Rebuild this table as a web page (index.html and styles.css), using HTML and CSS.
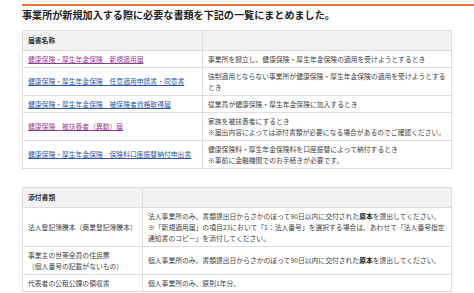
FILE: index.html
```html
<!DOCTYPE html>
<html lang="ja">
<head>
<meta charset="utf-8">
<link rel="stylesheet" href="styles.css">
</head>
<body>
<div class="page">
  <h2 class="title">事業所が新規加入する際に必要な書類を下記の一覧にまとめました。</h2>
  <table class="docs docs-forms">
    <colgroup><col class="c1"><col class="c2"></colgroup>
    <thead>
      <tr><th>届書名称</th><th></th></tr>
    </thead>
    <tbody>
      <tr><td><a class="visited" href="#">健康保険・厚生年金保険　新規適用届</a></td><td>事業所を設立し、健康保険・厚生年金保険の適用を受けようとするとき</td></tr>
      <tr><td><a href="#">健康保険・厚生年金保険　任意適用申請書・同意書</a></td><td>強制適用とならない事業所が健康保険・厚生年金保険の適用を受けようとするとき</td></tr>
      <tr><td><a href="#">健康保険・厚生年金保険　被保険者資格取得届</a></td><td>従業員が健康保険・厚生年金保険に加入するとき</td></tr>
      <tr><td><a class="visited" href="#">健康保険　被扶養者（異動）届</a></td><td>家族を被扶養者にするとき<br>※届出内容によっては添付書類が必要になる場合があるのでご確認ください。</td></tr>
      <tr><td><a href="#">健康保険・厚生年金保険　保険料口座振替納付申出書</a></td><td>健康保険料・厚生年金保険料を口座振替によって納付するとき<br>※事前に金融機関でのお手続きが必要です。</td></tr>
    </tbody>
  </table>
  <table class="docs docs-attach">
    <colgroup><col class="c1"><col class="c2"></colgroup>
    <thead>
      <tr><th>添付書類</th><th></th></tr>
    </thead>
    <tbody>
      <tr><td>法人登記簿謄本（商業登記簿謄本）</td><td>法人事業所のみ。書類提出日からさかのぼって90日以内に交付された<b>原本</b>を提出してください。<br>※「新規適用届」の項目23において「1：法人番号」を選択する場合は、あわせて「法人番号指定通知書のコピー」を添付してください。</td></tr>
      <tr><td>事業主の世帯全員の住民票<br>（個人番号の記載がないもの）</td><td>個人事業所のみ。書類提出日からさかのぼって90日以内に交付された<b>原本</b>を提出してください。</td></tr>
      <tr><td>代表者の公租公課の領収書</td><td>個人事業所のみ。原則1年分。</td></tr>
    </tbody>
  </table>
</div>
</body>
</html>
```

FILE: styles.css
```css
html, body {
  margin: 0;
  padding: 0;
  background: #ffffff;
}
body {
  font-family: "Noto Sans CJK JP", "Noto Sans", sans-serif;
  color: #333333;
}
.page {
  padding: 4px 0 0 22px;
}
.title {
  margin: 0;
  border-top: 2px solid #e8703f;
  padding-top: 1px;
  font-size: 10.1px;
  line-height: 16px;
  font-weight: bold;
  color: #222222;
  height: 23px;
}
.docs {
  width: 430px;
  border-collapse: collapse;
  table-layout: fixed;
  font-size: 6.8px;
  line-height: 11px;
  border: 1px solid #dedede;
}
.docs-forms .c1 { width: 180px; }
.docs-attach .c1 { width: 120px; }
.docs-attach {
  margin-top: 18px;
}
.docs th {
  background: #f2f2f2;
  text-align: left;
  font-weight: bold;
  padding: 4px 5px;
  height: 11px;
  color: #333333;
}
.docs td {
  padding: 2.5px 3px 2.5px 5px;
  border-top: 1px solid #dedede;
  vertical-align: middle;
  color: #444444;
}
.docs td + td, .docs th + th {
  border-left: 1px solid #dedede;
}
.docs a {
  color: #2c5aa8;
  text-decoration: underline;
}
.docs a.visited {
  color: #973c93;
}
.docs b {
  color: #222222;
}
```
